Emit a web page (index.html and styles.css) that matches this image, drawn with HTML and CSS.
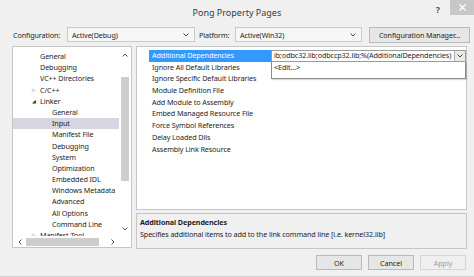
FILE: index.html
```html
<!DOCTYPE html>
<html lang="en">
<head>
    <meta charset="UTF-8">
    <title>Pong Property Pages</title>
    <link rel="stylesheet" href="styles.css">
</head>
<body>
    <div class="window">
        <div class="titlebar">
            <div class="title">Pong Property Pages</div>
            <div class="help">?</div>
            <div class="close">
                <svg width="7" height="7" viewBox="0 0 7 7"><path d="M0.5 0.5L6.5 6.5M6.5 0.5L0.5 6.5" stroke="#fff" stroke-width="1.2"/></svg>
            </div>
        </div>

        <div class="config-row">
            <span class="label label-config">Configuration:</span>
            <div class="combo combo-config">
                <span>Active(Debug)</span>
                <svg class="chev" width="6" height="4" viewBox="0 0 6 4"><path d="M0.5 0.5L3 3L5.5 0.5" fill="none" stroke="#444" stroke-width="1"/></svg>
            </div>
            <span class="label label-platform">Platform:</span>
            <div class="combo combo-platform">
                <span>Active(Win32)</span>
                <svg class="chev" width="6" height="4" viewBox="0 0 6 4"><path d="M0.5 0.5L3 3L5.5 0.5" fill="none" stroke="#444" stroke-width="1"/></svg>
            </div>
            <div class="button manager">Configuration Manager...</div>
        </div>

        <div class="main">
            <div class="tree">
                <div class="tree-body">
                    <div class="tree-items">
                        <div class="node lvl1">General</div>
                        <div class="node lvl1">Debugging</div>
                        <div class="node lvl1">VC++ Directories</div>
                        <div class="node lvl0"><span class="tw closed">&#9655;</span>C/C++</div>
                        <div class="node lvl0"><span class="tw">&#9698;</span>Linker</div>
                        <div class="node lvl2">General</div>
                        <div class="node lvl2 selected">Input</div>
                        <div class="node lvl2">Manifest File</div>
                        <div class="node lvl2">Debugging</div>
                        <div class="node lvl2">System</div>
                        <div class="node lvl2">Optimization</div>
                        <div class="node lvl2">Embedded IDL</div>
                        <div class="node lvl2">Windows Metadata</div>
                        <div class="node lvl2">Advanced</div>
                        <div class="node lvl2">All Options</div>
                        <div class="node lvl2">Command Line</div>
                        <div class="node lvl0"><span class="tw closed">&#9655;</span>Manifest Tool</div>
                    </div>
                    <div class="vscroll">
                        <svg width="6" height="4" viewBox="0 0 6 4"><path d="M0.5 3.5L3 1L5.5 3.5" fill="none" stroke="#555" stroke-width="1"/></svg>
                        <div class="vtrack"><div class="vthumb"></div></div>
                        <svg width="6" height="4" viewBox="0 0 6 4"><path d="M0.5 0.5L3 3L5.5 0.5" fill="none" stroke="#555" stroke-width="1"/></svg>
                    </div>
                </div>
                <div class="hscroll">
                    <svg width="4" height="6" viewBox="0 0 4 6"><path d="M3.5 0.5L1 3L3.5 5.5" fill="none" stroke="#555" stroke-width="1"/></svg>
                    <div class="htrack"><div class="hthumb"></div></div>
                    <svg width="4" height="6" viewBox="0 0 4 6"><path d="M0.5 0.5L3 3L0.5 5.5" fill="none" stroke="#555" stroke-width="1"/></svg>
                </div>
            </div>

            <div class="right">
                <div class="grid">
                    <div class="row">
                        <div class="name selected">Additional Dependencies</div>
                        <div class="value">
                            <div class="editor">
                                <span class="editor-text">ib;odbc32.lib;odbccp32.lib;%(AdditionalDependencies)</span>
                                <span class="editor-drop">
                                    <svg width="6" height="4" viewBox="0 0 6 4"><path d="M0.5 0.5L3 3L5.5 0.5" fill="none" stroke="#444" stroke-width="1"/></svg>
                                </span>
                            </div>
                            <div class="droplist">&lt;Edit...&gt;</div>
                        </div>
                    </div>
                    <div class="row"><div class="name">Ignore All Default Libraries</div><div class="value"></div></div>
                    <div class="row"><div class="name">Ignore Specific Default Libraries</div><div class="value"></div></div>
                    <div class="row"><div class="name">Module Definition File</div><div class="value"></div></div>
                    <div class="row"><div class="name">Add Module to Assembly</div><div class="value"></div></div>
                    <div class="row"><div class="name">Embed Managed Resource File</div><div class="value"></div></div>
                    <div class="row"><div class="name">Force Symbol References</div><div class="value"></div></div>
                    <div class="row"><div class="name">Delay Loaded Dlls</div><div class="value"></div></div>
                    <div class="row"><div class="name">Assembly Link Resource</div><div class="value"></div></div>
                </div>
                <div class="desc">
                    <div class="desc-title">Additional Dependencies</div>
                    <div class="desc-text">Specifies additional items to add to the link command line [i.e. kernel32.lib]</div>
                </div>
            </div>
        </div>

        <div class="footer">
            <div class="button">OK</div>
            <div class="button">Cancel</div>
            <div class="button disabled">Apply</div>
        </div>
    </div>
</body>
</html>
```

FILE: styles.css
```css
body {
    margin: 0;
    font-family: 'Noto Sans', 'Open Sans', sans-serif;
    font-size: 7.2px;
    letter-spacing: -0.1px;
    color: #1e1e1e;
    background: #f0f0f0;
}

.window {
    width: 474px;
    height: 276px;
    border-bottom: 1px solid #cfcfcf;
    background: #f0f0f0;
    display: flex;
    flex-direction: column;
    overflow: hidden;
}

/* title bar */
.titlebar {
    height: 26px;
    display: flex;
    align-items: flex-start;
}

.title {
    flex: 1;
    text-align: center;
    font-size: 9px;
    letter-spacing: 0;
    color: #3a3a3a;
    padding-top: 6px;
    padding-left: 38px;
}

.help {
    font-size: 9px;
    font-weight: bold;
    color: #555;
    padding-top: 3px;
    margin-right: 10px;
}

.close {
    width: 24px;
    height: 15px;
    background: #c7c7c7;
    display: flex;
    align-items: center;
    justify-content: center;
}

/* configuration row */
.config-row {
    display: flex;
    align-items: center;
    padding-left: 13px;
    height: 17px;
}

.label-config {
    width: 54px;
}

.label-platform {
    width: 36px;
    margin-left: 4px;
}

.combo {
    height: 15px;
    border: 1px solid #c9c9c9;
    background: #f7f7f7;
    display: flex;
    align-items: center;
    justify-content: space-between;
    padding: 0 5px 0 4px;
    box-sizing: border-box;
}

.combo-config {
    width: 128px;
}

.combo-platform {
    width: 127px;
}

.button {
    height: 15px;
    border: 1px solid #b9b9b9;
    background: #e6e6e6;
    display: flex;
    align-items: center;
    justify-content: center;
    box-sizing: border-box;
}

.manager {
    width: 101px;
    margin-left: 7px;
    height: 16px;
}

/* main area */
.main {
    display: flex;
    padding: 3px 0 0 12px;
    gap: 4px;
}

.tree {
    width: 120px;
    height: 202px;
    border: 1px solid #c6c6c6;
    background: #fff;
    box-sizing: border-box;
    display: flex;
    flex-direction: column;
}

.tree-body {
    flex: 1;
    display: flex;
    overflow: hidden;
}

.tree-items {
    flex: 1;
    padding-top: 4px;
    overflow: hidden;
}

.node {
    height: 11.2px;
    line-height: 11.2px;
    white-space: nowrap;
}

.lvl0 {
    padding-left: 19px;
}

.lvl1 {
    padding-left: 27px;
}

.lvl2 {
    padding-left: 39px;
}

.node.selected {
    background: #d6d6e2;
}

.tw {
    display: inline-block;
    width: 8px;
    font-size: 5px;
    color: #333;
    vertical-align: top;
}

.tw.closed {
    color: #777;
}

.vscroll {
    width: 12px;
    display: flex;
    flex-direction: column;
    align-items: center;
    padding: 6px 0 5px;
    gap: 4px;
}

.vtrack {
    flex: 1;
    width: 8px;
    padding-top: 16px;
    padding-bottom: 42px;
}

.vthumb {
    height: 100%;
    background: #cdcdcd;
}

.hscroll {
    height: 11px;
    display: flex;
    align-items: center;
    padding: 0 16px 0 5px;
    gap: 4px;
}

.htrack {
    flex: 1;
}

.hthumb {
    width: 73px;
    height: 8px;
    background: #cdcdcd;
}

/* property grid */
.right {
    width: 331px;
    display: flex;
    flex-direction: column;
    gap: 3px;
}

.grid {
    height: 164px;
    border: 1px solid #c6c6c6;
    background: #fff;
    box-sizing: border-box;
    padding: 3px 0 0 12px;
}

.row {
    display: flex;
    height: 11.7px;
    line-height: 11.7px;
}

.name {
    flex-shrink: 0;
    width: 122px;
    padding-left: 3px;
    box-sizing: border-box;
    white-space: nowrap;
}

.name.selected {
    background: #3399ff;
    color: #fff;
}

.value {
    flex: 1;
    min-width: 0;
    position: relative;
}

.editor {
    display: flex;
    height: 11.7px;
    border: 1px solid #9a9a9a;
    box-sizing: border-box;
    background: #fff;
}

.editor-text {
    flex: 1;
    min-width: 0;
    padding-left: 2px;
    line-height: 9.7px;
    white-space: nowrap;
    overflow: hidden;
}

.editor-drop {
    width: 10px;
    flex-shrink: 0;
    border-left: 1px solid #aaa;
    background: #eaeaea;
    display: flex;
    align-items: center;
    justify-content: center;
}

.droplist {
    position: absolute;
    left: 0;
    right: 0;
    top: 11.7px;
    height: 17px;
    border: 1px solid #8c8c8c;
    border-top: none;
    box-sizing: border-box;
    background: #fff;
    padding-left: 2px;
    line-height: 10px;
    box-shadow: 1px 1px 1px rgba(0, 0, 0, 0.15);
}

.desc {
    height: 36px;
    border: 1px solid #c6c6c6;
    box-sizing: border-box;
    padding: 2px 3px;
    line-height: 12px;
}

.desc-title {
    font-weight: bold;
}

/* footer buttons */
.footer {
    display: flex;
    justify-content: flex-end;
    gap: 6px;
    padding: 6px 8px 0 0;
}

.footer .button {
    width: 46px;
}

.button.disabled {
    color: #a0a0a0;
    border-color: #d6d6d6;
    background: #efefef;
}
```
